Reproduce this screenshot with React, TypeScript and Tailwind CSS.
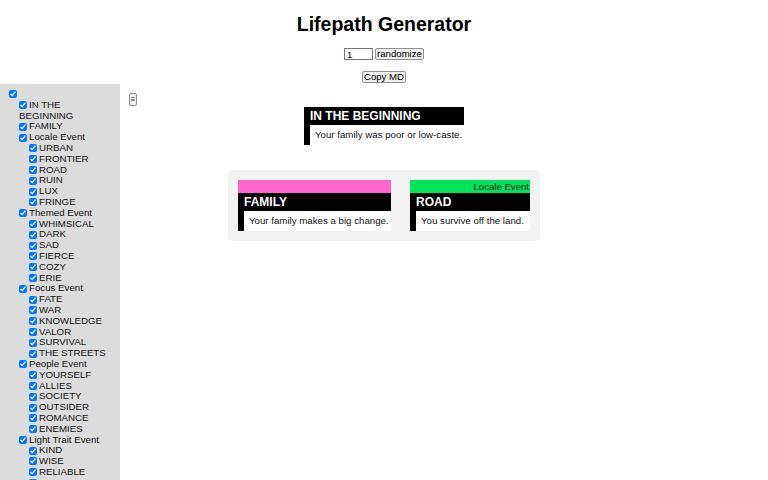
import React from 'react';

type Node = { label: string; children?: string[] };

const tree: Node[] = [
  { label: 'IN THE BEGINNING' },
  { label: 'FAMILY' },
  { label: 'Locale Event', children: ['URBAN', 'FRONTIER', 'ROAD', 'RUIN', 'LUX', 'FRINGE'] },
  { label: 'Themed Event', children: ['WHIMSICAL', 'DARK', 'SAD', 'FIERCE', 'COZY', 'ERIE'] },
  { label: 'Focus Event', children: ['FATE', 'WAR', 'KNOWLEDGE', 'VALOR', 'SURVIVAL', 'THE STREETS'] },
  { label: 'People Event', children: ['YOURSELF', 'ALLIES', 'SOCIETY', 'OUTSIDER', 'ROMANCE', 'ENEMIES'] },
  { label: 'Light Trait Event', children: ['KIND', 'WISE', 'RELIABLE', 'PROTECTIVE'] },
];

const Box = () => (
  <input
    type="checkbox"
    defaultChecked
    className="inline-block w-[8px] h-[8px] m-0 mr-[2px] mt-[1.4px] align-top accent-[#0075ff]"
  />
);

const Row: React.FC<{ indent: string; label?: string }> = ({ indent, label }) => (
  <div className={indent}>
    <Box />
    {label}
  </div>
);

const Card: React.FC<{
  title: string;
  text: string;
  width: string;
  bar?: string;
  tag?: string;
}> = ({ title, text, width, bar, tag }) => (
  <div className={`flex flex-col ${width}`}>
    {bar && (
      <div className={`h-[13px] ${bar} text-right pr-[1px] text-[9.6px] leading-[13px] text-[#1a1a1a]`}>
        {tag}
      </div>
    )}
    <div className="h-[18px] bg-black text-white font-bold text-[12px] leading-[18px] pl-[6px]">
      {title}
    </div>
    <div className="border-l-[6px] border-black bg-white pl-[5px] text-[9.7px] leading-[20px] h-[20px] text-[#111] whitespace-nowrap">
      {text}
    </div>
  </div>
);

export default function App() {
  return (
    <div className="min-h-screen bg-white text-black font-['Liberation_Sans',Arial,sans-serif]">
      {/* header */}
      <div className="flex flex-col items-center pt-[12px]">
        <h1 className="text-[19.5px] leading-[24px] font-bold">Lifepath Generator</h1>
        <div className="flex items-center gap-[2px] mt-[12px]">
          <input
            type="text"
            defaultValue="1"
            className="w-[29px] h-[12px] border border-[#767676] px-[2px] text-[9.6px] leading-[10px] outline-none"
          />
          <button className="h-[12px] px-[1px] border border-[#8f8f8f] rounded-[2px] bg-[#efefef] text-[9.6px] leading-[10px]">
            randomize
          </button>
        </div>
        <button className="mt-[11px] h-[12px] px-[1px] border border-[#8f8f8f] rounded-[2px] bg-[#efefef] text-[9.6px] leading-[10px]">
          Copy MD
        </button>
      </div>

      <div className="grid grid-cols-[120px_1fr_120px] mt-[1px]">
        {/* sidebar */}
        <div className="bg-[#dcdcdc] pt-[5px] pr-[7px] pb-[8px] text-[9.7px] leading-[10.8px] text-[#111]">
          <Row indent="pl-[9px]" />
          {tree.map((n) => (
            <React.Fragment key={n.label}>
              <Row indent="pl-[19px]" label={n.label} />
              {n.children?.map((c) => (
                <Row key={c} indent="pl-[29px]" label={c} />
              ))}
            </React.Fragment>
          ))}
        </div>

        {/* main */}
        <div className="flex flex-col">
          <button className="self-start ml-[9px] mt-[9px] w-[8px] h-[13px] border border-[#8f8f8f] rounded-[2px] bg-[#efefef] text-[8px] leading-[11px] text-[#333] flex items-center justify-center">
            ≡
          </button>
          <div className="mt-[1px] self-center">
            <Card title="IN THE BEGINNING" text="Your family was poor or low-caste." width="w-[160px]" />
          </div>
          <div className="mt-[25px] self-center flex items-start gap-[19px] bg-[#f3f3f3] rounded-[5px] p-[10px]">
            <Card
              title="FAMILY"
              text="Your family makes a big change."
              width="w-[153px]"
              bar="bg-[#ff66cc]"
            />
            <Card
              title="ROAD"
              text="You survive off the land."
              width="w-[120px]"
              bar="bg-[#00e35a]"
              tag="Locale Event"
            />
          </div>
        </div>

        <div />
      </div>
    </div>
  );
}
